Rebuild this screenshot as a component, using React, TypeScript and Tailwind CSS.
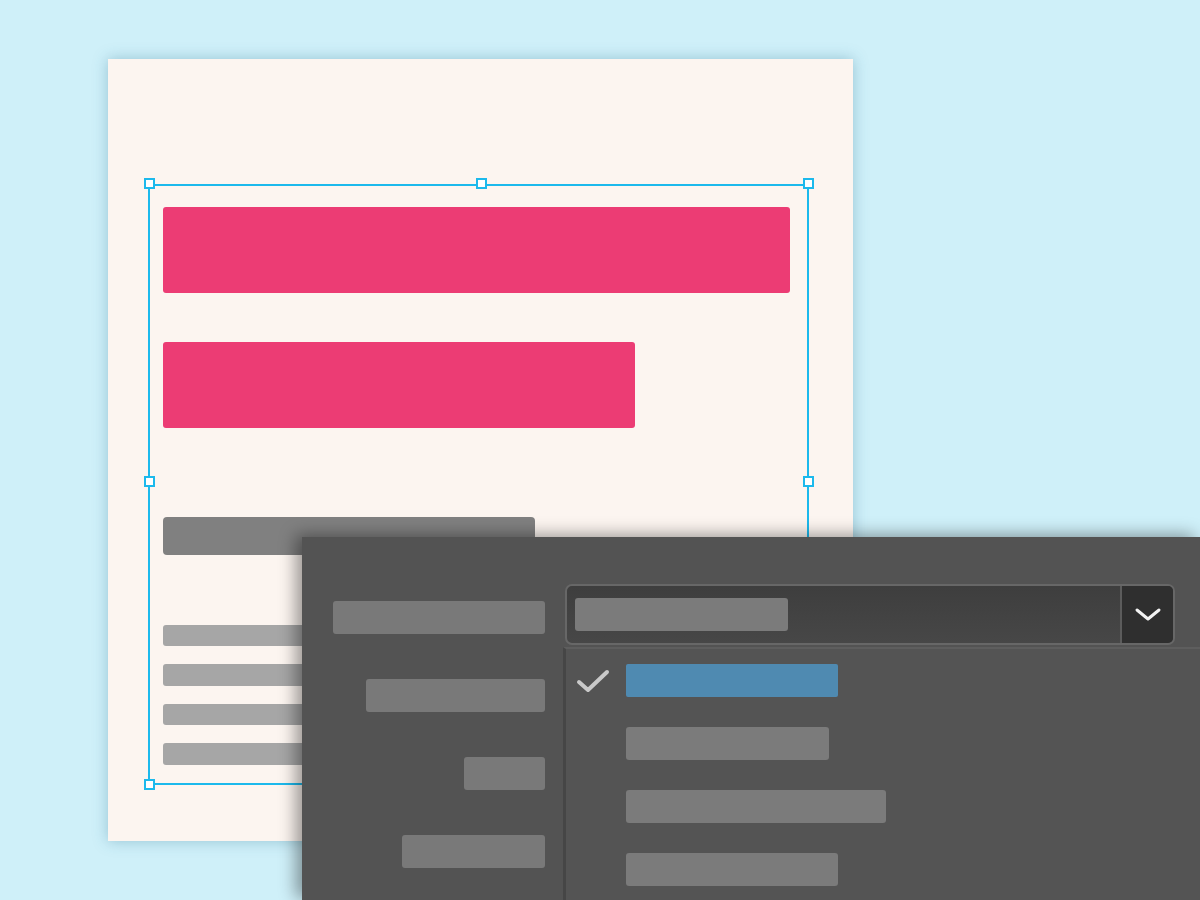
import React from "react";

function Handle({ className }: { className: string }) {
  return (
    <div
      className={
        "absolute w-[11px] h-[11px] bg-white border-2 border-[#1cb9ec] " + className
      }
    />
  );
}

export default function App() {
  return (
    <div className="relative w-[1200px] h-[900px] overflow-hidden bg-[#cff0f9] font-['Liberation_Sans',sans-serif]">
      {/* Document page */}
      <div className="absolute left-[108px] top-[59px] w-[745px] h-[782px] bg-[#fcf5f0] shadow-[0_0_14px_rgba(40,110,140,0.35)]">
        <div className="flex flex-col items-start pl-[55px] pt-[148px]">
          <div className="w-[627px] h-[86px] rounded-[3px] bg-[#ec3c74]" />
          <div className="w-[472px] h-[86px] rounded-[3px] bg-[#ec3c74] mt-[49px]" />
          <div className="w-[372px] h-[38px] rounded-[4px] bg-[#808080] mt-[89px]" />
          <div className="flex flex-col gap-[18px] mt-[70px]">
            <div className="w-[360px] h-[21px] rounded-[3px] bg-[#a6a6a6]" />
            <div className="w-[360px] h-[22px] rounded-[3px] bg-[#a6a6a6]" />
            <div className="w-[360px] h-[21px] rounded-[3px] bg-[#a6a6a6]" />
            <div className="w-[360px] h-[22px] rounded-[3px] bg-[#a6a6a6]" />
          </div>
        </div>

        {/* Selection box */}
        <div className="absolute left-[40px] top-[125px] w-[661px] h-[601px] border-2 border-[#1cb9ec]">
          <Handle className="-left-[6.5px] -top-[8px]" />
          <Handle className="left-[326px] -top-[8px]" />
          <Handle className="-right-[6.5px] -top-[8px]" />
          <Handle className="-left-[6.5px] top-[290px]" />
          <Handle className="-right-[6.5px] top-[290px]" />
          <Handle className="-left-[6.5px] -bottom-[6.5px]" />
        </div>
      </div>

      {/* Dark panel */}
      <div className="absolute left-[302px] top-[537px] right-0 bottom-0 bg-[#535353] shadow-[-6px_-2px_16px_rgba(0,0,0,0.4)] flex">
        <div className="w-[243px] shrink-0 flex flex-col items-end pt-[64px] gap-[45px]">
          <div className="w-[212px] h-[33px] rounded-[3px] bg-[#797979]" />
          <div className="w-[179px] h-[33px] rounded-[3px] bg-[#797979]" />
          <div className="w-[81px] h-[33px] rounded-[3px] bg-[#797979]" />
          <div className="w-[143px] h-[33px] rounded-[3px] bg-[#797979]" />
        </div>

        <div className="flex-1 flex flex-col pt-[47px] ml-[18px]">
          {/* Select box */}
          <div className="ml-[2px] w-[610px] h-[61px] rounded-[7px] border-2 border-[#676767] bg-gradient-to-b from-[#3e3e3e] to-[#474747] flex overflow-hidden">
            <div className="flex-1 flex items-center pl-[8px]">
              <div className="w-[213px] h-[33px] rounded-[3px] bg-[#7b7b7b]" />
            </div>
            <div className="w-[53px] h-full bg-[#2f2f2f] border-l-2 border-[#5c5c5c] flex items-center justify-center">
              <svg width="28" height="16" viewBox="0 0 28 16" fill="none">
                <polyline
                  points="3,3 14,12 25,3"
                  stroke="#f2f2f2"
                  strokeWidth="3"
                  strokeLinecap="round"
                  strokeLinejoin="round"
                />
              </svg>
            </div>
          </div>

          {/* Dropdown list */}
          <div className="flex-1 mt-[2px] bg-[#545454] border-t-2 border-l-[3px] border-t-[#5e5e5e] border-l-[#464646] flex flex-col pt-[15px] gap-[30px]">
            <div className="flex items-center">
              <div className="w-[60px] flex justify-start pl-[9px]">
                <svg width="36" height="26" viewBox="0 0 36 26" fill="none">
                  <polyline
                    points="4,14 13,22 32,4"
                    stroke="#c9c9c9"
                    strokeWidth="4"
                    strokeLinecap="round"
                    strokeLinejoin="round"
                  />
                </svg>
              </div>
              <div className="w-[212px] h-[33px] rounded-[2px] bg-[#4f8ab1]" />
            </div>
            <div className="flex items-center pl-[60px]">
              <div className="w-[203px] h-[33px] rounded-[3px] bg-[#7b7b7b]" />
            </div>
            <div className="flex items-center pl-[60px]">
              <div className="w-[260px] h-[33px] rounded-[3px] bg-[#7b7b7b]" />
            </div>
            <div className="flex items-center pl-[60px]">
              <div className="w-[212px] h-[33px] rounded-[3px] bg-[#7b7b7b]" />
            </div>
          </div>
        </div>
      </div>
    </div>
  );
}
